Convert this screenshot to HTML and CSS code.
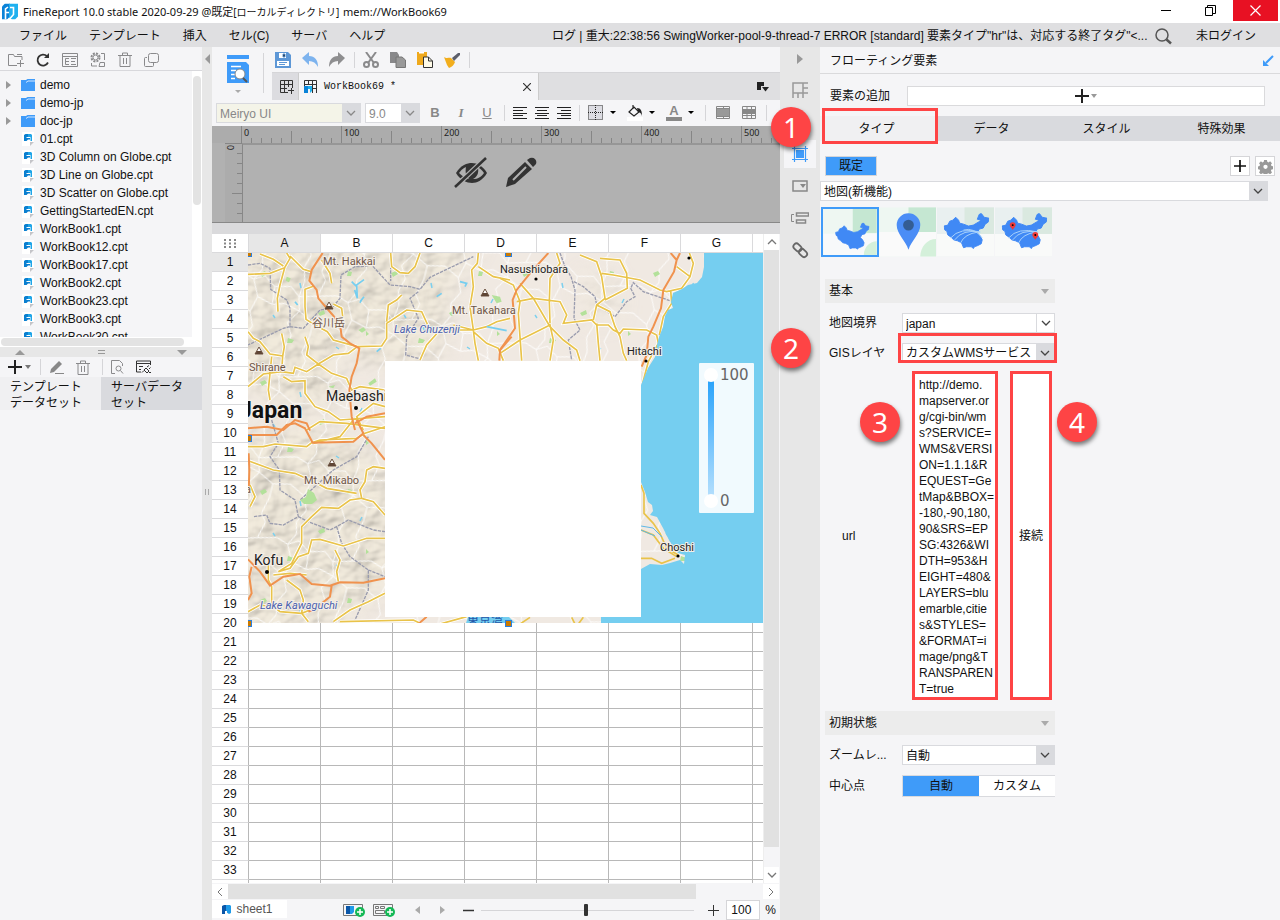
FILE: index.html
```html
<!DOCTYPE html>
<html lang="ja">
<head>
<meta charset="utf-8">
<title>FineReport 10.0</title>
<link rel="stylesheet" href="styles.css">
</head>
<body>
<svg class="defs" aria-hidden="true">
  <defs>
    <symbol id="fr" viewBox="0 0 16 16"><path d="M0 3 3 0h5v13l-3 3H0z" fill="#0a83d8"/><path d="M7 0h9v13l-3 3h-3l-3-2z" fill="#1fb0ef"/><path d="M3.500 16V9H7M3.500 9V5.500L6 3.500M8 4h3.500v7L8 15" fill="none" stroke="#fff" stroke-width="1.600"/></symbol>
    <symbol id="cpt" viewBox="0 0 12 14"><path d="M0 0h12v10l-4 4H0z" fill="#fff"/><path d="M8 10h4l-4 4z" fill="#c4c4c8"/><path d="M2 3 3.500 2H6v3H4.500v1H6v1.500L4.500 9H2z" fill="#0a7fd0"/><path d="M6 2h3l1 1v6H8.500V5H6z" fill="#1fa5e8"/><path d="M6 6h2v1.500H6z" fill="#0a7fd0"/></symbol>
    <symbol id="folder" viewBox="0 0 14 12"><path d="M0 1h5l1.500-1H14v12H0z" fill="#3f9bf9"/><path d="M5 3.500 7 2h7" stroke="#cfe5ff" fill="none"/></symbol>
    <symbol id="chev" viewBox="0 0 10 6"><path d="m1 1 4 4 4-4" fill="none" stroke="currentColor" stroke-width="1.300"/></symbol>
    <symbol id="plus" viewBox="0 0 14 14"><path d="M7 0v14M0 7h14" stroke="currentColor" stroke-width="2"/></symbol>
    <symbol id="trash" viewBox="0 0 14 15"><path d="M0 3.500h14M4.500 3V1h5v2M2 3.500v11h10v-11M5.500 6v6M8.500 6v6" fill="none" stroke="currentColor"/></symbol>
    <symbol id="china" viewBox="0 0 46 36"><path d="M0 13 4 12 6 8 9 7 12 4 15 7 16 10 20 11 25 13 30 12 35 9 38 7 34 6 36 1 38 0 41 4 46 5 45 9 42 11 40 15 36 16 34 20 37 23 39 27 38 31 34 33 31 34 30 36 28 34 23 34 20 35 18 30 14 28 10 27 7 24 4 22 3 18 1 17z" fill="#4089f5" stroke="#4089f5" stroke-linejoin="round"/></symbol>
    <symbol id="addgreen" viewBox="0 0 10 10"><circle cx="5" cy="5" r="5" fill="#14b855"/><path d="M5 2v6M2 5h6" stroke="#fff" stroke-width="1.500"/></symbol>
    <symbol id="gear" viewBox="0 0 16 16"><path fill="currentColor" fill-rule="evenodd" d="M6.500 1h3l.4 2 1.300.6 1.700-1.100 2 2-1.100 1.700.6 1.300 2 .4v3l-2 .4-.6 1.300 1.100 1.700-2 2-1.700-1.100-1.300.6-.4 1.500h-3l-.4-1.500-1.300-.6-1.700 1.100-2-2 1.100-1.700-.6-1.300-1.600-.4v-3l1.600-.4.6-1.300-1.100-1.700 2-2 1.700 1.100 1.300-.6zM8 6a2.300 2.300 0 1 0 0 4.600A2.300 2.300 0 0 0 8 6z"/></symbol>
  </defs>
</svg>
<div class="app">
  <header class="titlebar">
    <svg class="app-logo" viewBox="0 0 16 16"><use href="#fr"/></svg>
    <span class="app-name">FineReport 10.0 stable 2020-09-29 @既定<span class="app-dir">[ローカルディレクトリ]</span></span>
    <span class="app-file">mem://WorkBook69</span>
    <div class="win">
      <button class="win-btn" aria-label="最小化"><svg width="12" height="11"><path d="M1 5.500h10" stroke="#000"/></svg></button>
      <button class="win-btn" aria-label="元に戻す"><svg width="11" height="11" fill="none" stroke="#000"><path d="M.5 2.500h7v8h-7zM2.500 2V.5h8v8H8"/></svg></button>
      <button class="win-btn close" aria-label="閉じる"><svg width="11" height="11"><path d="m.5.5 10 10m0-10-10 10" stroke="#fff" stroke-width="1.200"/></svg></button>
    </div>
  </header>
  <nav class="menubar">
    <div class="menus">
      <button>ファイル</button><button>テンプレート</button><button>挿入</button><button>セル(C)</button><button>サーバ</button><button>ヘルプ</button>
    </div>
    <span class="log">ログ | 重大:22:38:56 SwingWorker-pool-9-thread-7 ERROR [standard] 要素タイプ"hr"は、対応する終了タグ"&lt;...</span>
    <button class="find" aria-label="検索"><svg width="17" height="17" fill="none" stroke="#555"><circle cx="7" cy="7" r="6" stroke-width="1.500"/><path d="m11.500 11.500 4.500 4" stroke-width="2.500"/></svg></button>
    <button class="login">未ログイン</button>
  </nav>

  <div class="body">
    <aside class="left">
      <div class="tools files">
        <button aria-label="新規フォルダ"><svg width="16" height="14" fill="none" stroke="#8a8a8c"><path d="M9 12.500H.5v-11h5l1 2H14V7M9 1.500h5M9 10.500h7M12.500 7v7"/></svg></button>
        <button aria-label="更新"><svg width="14" height="14" fill="none" stroke="#333" stroke-width="1.800"><path d="M12 9.500A5.500 5.500 0 1 1 11 3.200"/><path d="M13 0v5H8z" fill="#333" stroke="none"/></svg></button>
        <button aria-label="名前変更"><svg width="16" height="14" fill="none" stroke="#8a8a8c"><path d="M.5.5h15v13H.5zM0 3.500h16M7 5.500H3.500v6H7M4 8.500h3M9 5.500h5M9 8.500h4M9 11.500h5"/></svg></button>
        <button aria-label="設定"><svg width="16" height="15" fill="none" stroke="#8a8a8c"><circle cx="5.500" cy="5.500" r="4" stroke-width="2" stroke-dasharray="2 1.140"/><circle cx="5.500" cy="5.500" r="2.500"/><path d="M11 1.500h3.500V8M1.500 11v3H7M10 10.500h4.500v4H9z"/></svg></button>
        <button aria-label="削除"><svg class="g" width="14" height="15"><use href="#trash"/></svg></button>
        <button aria-label="コピー"><svg width="15" height="14" fill="none" stroke="#8a8a8c"><rect x="4.500" y=".5" width="10" height="9" rx="2"/><path d="M3 4.500H1.500a1 1 0 0 0-1 1v7a1 1 0 0 0 1 1h7a1 1 0 0 0 1-1V10"/></svg></button>
      </div>
      <div class="tree-wrap">
        <ul class="tree">
          <li class="dir"><svg width="5" height="8"><path d="M0 0v8l5-4z" fill="#999"/></svg><svg width="14" height="12"><use href="#folder"/></svg>demo</li>
          <li class="dir"><svg width="5" height="8"><path d="M0 0v8l5-4z" fill="#999"/></svg><svg width="14" height="12"><use href="#folder"/></svg>demo-jp</li>
          <li class="dir"><svg width="5" height="8"><path d="M0 0v8l5-4z" fill="#999"/></svg><svg width="14" height="12"><use href="#folder"/></svg>doc-jp</li>
          <li><svg width="12" height="14"><use href="#cpt"/></svg>01.cpt</li>
          <li><svg width="12" height="14"><use href="#cpt"/></svg>3D Column on Globe.cpt</li>
          <li><svg width="12" height="14"><use href="#cpt"/></svg>3D Line on Globe.cpt</li>
          <li><svg width="12" height="14"><use href="#cpt"/></svg>3D Scatter on Globe.cpt</li>
          <li><svg width="12" height="14"><use href="#cpt"/></svg>GettingStartedEN.cpt</li>
          <li><svg width="12" height="14"><use href="#cpt"/></svg>WorkBook1.cpt</li>
          <li><svg width="12" height="14"><use href="#cpt"/></svg>WorkBook12.cpt</li>
          <li><svg width="12" height="14"><use href="#cpt"/></svg>WorkBook17.cpt</li>
          <li><svg width="12" height="14"><use href="#cpt"/></svg>WorkBook2.cpt</li>
          <li><svg width="12" height="14"><use href="#cpt"/></svg>WorkBook23.cpt</li>
          <li><svg width="12" height="14"><use href="#cpt"/></svg>WorkBook3.cpt</li>
          <li><svg width="12" height="14"><use href="#cpt"/></svg>WorkBook30.cpt</li>
        </ul>
        <div class="tree-scroll"><i></i></div>
      </div>
      <div class="tree-hscroll"><i></i></div>
      <div class="hsplit"><svg width="10" height="5"><path d="M0 5h10L5 0z" fill="#999"/></svg><svg width="7" height="4"><path d="M0 .5h7M0 3.500h7" stroke="#999"/></svg><svg width="10" height="5"><path d="M0 0h10L5 5z" fill="#999"/></svg></div>
      <div class="tools data">
        <button class="add" aria-label="追加"><svg width="14" height="14"><use href="#plus"/></svg><svg width="6" height="4"><path d="M0 0h6L3 4z" fill="#777"/></svg></button>
        <span class="sep"></span>
        <button aria-label="編集"><svg width="15" height="14"><path d="m1 13 1-4 8-8 3 3-8 8z" fill="#888"/><path d="M6 13.500h9" stroke="#888"/></svg></button>
        <button aria-label="削除"><svg class="g" width="14" height="15"><use href="#trash"/></svg></button>
        <span class="sep"></span>
        <button aria-label="プレビュー"><svg width="13" height="14" fill="none" stroke="#8a8a8c"><path d="M4 13.500H.5V.5h8l3 3V6"/><circle cx="7.500" cy="8.500" r="2.500"/><path d="m9.500 10.500 2.500 3"/></svg></button>
        <button aria-label="接続"><svg width="15" height="14" fill="none" stroke="#333"><path d="M14.500 5V1H.5v11H5M0 3.500h14M3 6.500h4M3 9.500h2M13 12.500h2"/><path d="m6 12.500 2-2M8 10l3 3 2-2-3-3zM11 7l2-1.500M13 9l1.500-1.500"/></svg></button>
      </div>
      <div class="ds-tabs"><button>テンプレート<br>データセット</button><button class="off">サーバデータ<br>セット</button></div>
    </aside>

    <div class="vsplit"><svg width="5" height="10"><path d="M5 0v10L0 5z" fill="#999"/></svg><svg class="grip" width="4" height="7"><path d="M.5 0v6M3.500 0v6" stroke="#aaa"/></svg></div>

    <main class="center">
      <div class="head">
        <button class="preview" aria-label="プレビュー"><svg width="22" height="38"><path d="M0 0h22v4H0zM0 7h19l3 3v18H0z" fill="#3f9bf9"/><path d="M4 11.500h10M4 15.500h5M4 19.500h4M4 23.500h4" stroke="#fff" stroke-width="1.500"/><circle cx="13" cy="19" r="5" fill="#fff" stroke="#888"/><path d="m16 23 4 4" stroke="#555" stroke-width="2"/><path d="M8 35h6l-3 3z" fill="#aaa"/></svg></button>
        <div class="head-main">
          <div class="actions">
            <span class="sep tall"></span>
            <button aria-label="保存"><svg width="16" height="16"><path d="M0 0h13l3 3v13H0z" fill="#5d97d6"/><path d="M4 1h7v5H4zM2 9h12v5H2z" fill="#fff"/><path d="M8 2h2v3H8zM4 10.500h8M4 12.500h6" stroke="#5d97d6"/></svg></button>
            <button aria-label="元に戻す"><svg width="16" height="15"><path d="M0 6 7 0v4c6 0 9 4 9 11-2-4-5-6-9-6v4z" fill="#7db3ee"/></svg></button>
            <button aria-label="やり直す"><svg width="16" height="15"><path d="M16 6 9 0v4C3 4 0 8 0 15c2-4 5-6 9-6v4z" fill="#8e8e90"/></svg></button>
            <span class="sep"></span>
            <button aria-label="切り取り"><svg width="16" height="16" fill="none" stroke="#8a8a8c" stroke-width="2"><path d="m3 0 8 11M13 0 5 11"/><circle cx="3.500" cy="12.500" r="2.500"/><circle cx="12.500" cy="12.500" r="2.500"/></svg></button>
            <button aria-label="コピー"><svg width="16" height="16"><path d="M0 0h7l2 3v8H0z" fill="#88888a"/><path d="M6 5h6l3.500 3v7.500H6z" fill="#999" stroke="#777"/></svg></button>
            <button aria-label="貼り付け"><svg width="16" height="16"><path d="M0 0h10v13H0z" fill="#efa91c"/><path d="M2 0h5v1.500H2z" fill="#fff"/><path d="M6.500 5h5l4 4v6.500h-9z" fill="#fffbe8" stroke="#333"/><path d="M11.500 5v4h4" fill="none" stroke="#333"/></svg></button>
            <button aria-label="書式のコピー"><svg width="16" height="16"><path d="M0 5c3 2 5 0 7 1l4 4c-1 3-3 5-6 6L3 13z" fill="#f2ae1d"/><path d="m8 6 6-5 2 0v2l-6 6z" fill="#5c5f6b"/></svg></button>
            <span class="sep"></span>
          </div>
          <div class="doc-tabs">
            <button class="new-tab" aria-label="新規"><svg width="14" height="14" fill="none" stroke="#333"><path d="M8 12.500H.5V.5h12V8M0 4.500h13M0 8.500h7M4.500 0v13M8.500 0v7M8 10.500h6M11.500 8v6"/></svg></button>
            <div class="doc-tab"><svg width="13" height="13"><path d="M.5 13V.5h12V13M0 4.500h13M4.500 0v5M8.500 0v13M9 8.500h4" fill="none" stroke="#333"/><path d="M0 6h8v7H0z" fill="#f5f5f7"/><path d="M0 6h4v7H0z" fill="#0a83d8"/><path d="M4 6h4v5l-2 2V9H4z" fill="#1fb0ef"/></svg><span>WorkBook69 *</span><button class="x" aria-label="閉じる"><svg width="8" height="8"><path d="m0 0 8 8m0-8L0 8" stroke="#333" stroke-width="1.200"/></svg></button></div>
            <button class="tab-list" aria-label="タブ一覧"><svg width="12" height="10"><path d="M0 0h7v4H4v4H0z" fill="#222"/><path d="M5 5h7L8.500 9.500z" fill="#222"/></svg></button>
          </div>
        </div>
      </div>
      <div class="format">
        <div class="select font"><select aria-label="フォント" disabled><option>Meiryo UI</option></select><span class="arrow"><svg width="10" height="6"><use href="#chev"/></svg></span></div>
        <div class="select size"><select aria-label="サイズ" disabled><option>9.0</option></select><span class="arrow"><svg width="10" height="6"><use href="#chev"/></svg></span></div>
        <button class="txt bold">B</button><button class="txt ital">I</button><button class="txt und">U</button>
        <span class="sep"></span>
        <button aria-label="左揃え"><svg width="14" height="12" stroke="#222"><path d="M0 .5h14M0 3.500h10M0 6.500h14M0 8.500h10M0 11.500h14"/></svg></button>
        <button aria-label="中央揃え"><svg width="14" height="12" stroke="#222"><path d="M0 .5h14M2 3.500h10M0 6.500h14M2 8.500h10M0 11.500h14"/></svg></button>
        <button aria-label="右揃え"><svg width="14" height="12" stroke="#222"><path d="M0 .5h14M4 3.500h10M0 6.500h14M4 8.500h10M0 11.500h14"/></svg></button>
        <span class="sep"></span>
        <button class="drop" aria-label="罫線"><svg width="16" height="16"><path d="M.5.5h14v14H.5z" fill="#dcdce2"/><path d="M.5.5h14v14H.5zM7.500 0v15M0 7.500h15" fill="none" stroke="#222" stroke-dasharray="1 1"/></svg><svg width="6" height="4"><path d="M0 0h6L3 3z"/></svg></button>
        <button class="drop" aria-label="塗りつぶし"><svg width="16" height="16"><path d="M0 12h16v4H0z" fill="#fff"/><path d="m2 7 5-5 5 5-5 4zM6 0v4" fill="#f5f5f7" stroke="#222" stroke-width="1.200"/><path d="M10 3c4 0 5 3 5 8-1-3-2-4-4-4z" fill="#222"/></svg><svg width="6" height="4"><path d="M0 0h6L3 3z"/></svg></button>
        <button class="drop fc" aria-label="文字色"><span>A</span><svg width="6" height="4"><path d="M0 0h6L3 3z"/></svg></button>
        <span class="sep"></span>
        <button class="wide" aria-label="セル結合"><svg width="15" height="14"><path d="M.5.5h13v12H.5zM0 2.500h14M0 10.500h14M7.500 0v2M7.500 11v2" fill="none" stroke="#888"/><path d="M1 3h12v7H1z" fill="#999"/></svg></button>
        <button class="wide" aria-label="結合解除"><svg width="15" height="14"><path d="M.5.5h13v12H.5z" fill="#f5f5f7" stroke="#888"/><path d="M0 3.500h14M0 9.500h14M5 0v13M9.500 0v13" stroke="#888"/><path d="M1 4h12v4H1z" fill="#888"/></svg></button>
        <span class="sep"></span>
      </div>

      <div class="report-head">
        <svg class="ruler-x" height="17">
          <defs>
            <pattern id="tx" x="29" width="100" height="17" patternUnits="userSpaceOnUse"><path d="M.5 0v17M50.500 5v12M10.500 12v5M20.500 12v5M30.500 12v5M40.500 12v5M60.500 12v5M70.500 12v5M80.500 12v5M90.500 12v5" stroke="#868686"/></pattern>
            <pattern id="ty" y="0" width="17" height="100" patternUnits="userSpaceOnUse"><path d="M0 .5h17M7 50.500h10M12 10.500h5M12 20.500h5M12 30.500h5M12 40.500h5M12 60.500h5M12 70.500h5" stroke="#868686"/></pattern>
          </defs>
          <rect x="29" width="100%" height="17" fill="url(#tx)"/>
          <g class="ruler-num"><text x="32" y="10">0</text><text x="132" y="10">100</text><text x="232" y="10">200</text><text x="332" y="10">300</text><text x="432" y="10">400</text><text x="532" y="10">500</text></g>
        </svg>
        <div class="rh-body">
          <svg class="ruler-y" width="17"><rect width="17" height="100%" fill="url(#ty)"/><text class="ruler-num" transform="translate(2 6) rotate(90)" x="-4" y="0">0</text></svg>
          <div class="rh-canvas">
            <button aria-label="非表示"><svg width="34" height="31"><path d="M2 16C7 8 13 6 18 6s11 3 15 10c-4 7-10 10-15 10S6 23 2 16z" fill="#333"/><path d="M5 16c3-4 5-5 7-6-1 6 0 9 3 12-4-1-7-3-10-6zm25 0c-2-3-4-5-6-5 1 5-1 9-5 11 5 0 8-2 11-6z" fill="#b1b1b1"/><path d="M1 30 32 1" stroke="#b1b1b1" stroke-width="5"/><path d="M1 30 32 1" stroke="#333" stroke-width="2.500"/></svg></button>
            <button aria-label="編集"><svg width="32" height="31"><path d="m1 30 2-9L20 5l7 7L10 27zM22 3l3-2q3-1 5 1t1 5l-3 3z" fill="#333"/><path d="m8 23 13-13" stroke="#b1b1b1" stroke-width="2"/></svg></button>
          </div>
        </div>
      </div>

      <div class="sheet-wrap">
        <div class="sheet">
          <table>
            <thead><tr><th class="corner"><svg width="12" height="9"><path d="M0 1h12M0 4.500h12M0 8h12" stroke="#888" stroke-width="2" stroke-dasharray="2 3"/></svg></th><th class="on">A</th><th>B</th><th>C</th><th>D</th><th>E</th><th>F</th><th>G</th><th></th></tr></thead>
            <tbody>
            <tr><th class="on">1<td><td><td><td><td><td><td><td>
            <tr><th>2<td><td><td><td><td><td><td><td>
            <tr><th>3<td><td><td><td><td><td><td><td>
            <tr><th>4<td><td><td><td><td><td><td><td>
            <tr><th>5<td><td><td><td><td><td><td><td>
            <tr><th>6<td><td><td><td><td><td><td><td>
            <tr><th>7<td><td><td><td><td><td><td><td>
            <tr><th>8<td><td><td><td><td><td><td><td>
            <tr><th>9<td><td><td><td><td><td><td><td>
            <tr><th>10<td><td><td><td><td><td><td><td>
            <tr><th>11<td><td><td><td><td><td><td><td>
            <tr><th>12<td><td><td><td><td><td><td><td>
            <tr><th>13<td><td><td><td><td><td><td><td>
            <tr><th>14<td><td><td><td><td><td><td><td>
            <tr><th>15<td><td><td><td><td><td><td><td>
            <tr><th>16<td><td><td><td><td><td><td><td>
            <tr><th>17<td><td><td><td><td><td><td><td>
            <tr><th>18<td><td><td><td><td><td><td><td>
            <tr><th>19<td><td><td><td><td><td><td><td>
            <tr><th>20<td><td><td><td><td><td><td><td>
            <tr><th>21<td><td><td><td><td><td><td><td>
            <tr><th>22<td><td><td><td><td><td><td><td>
            <tr><th>23<td><td><td><td><td><td><td><td>
            <tr><th>24<td><td><td><td><td><td><td><td>
            <tr><th>25<td><td><td><td><td><td><td><td>
            <tr><th>26<td><td><td><td><td><td><td><td>
            <tr><th>27<td><td><td><td><td><td><td><td>
            <tr><th>28<td><td><td><td><td><td><td><td>
            <tr><th>29<td><td><td><td><td><td><td><td>
            <tr><th>30<td><td><td><td><td><td><td><td>
            <tr><th>31<td><td><td><td><td><td><td><td>
            <tr><th>32<td><td><td><td><td><td><td><td>
            <tr><th>33<td><td><td><td><td><td><td><td>
            <tr><th><td><td><td><td><td><td><td><td>
            </tbody>
          </table>
          <div class="map">
            <svg width="515" height="370" viewBox="0 0 515 370" role="img" aria-label="地図">
              <defs>
                <filter id="relief" x="0" y="0" width="100%" height="100%"><feTurbulence type="fractalNoise" baseFrequency=".035 .045" numOctaves="3" seed="8"/><feDiffuseLighting surfaceScale="6" lighting-color="#f3ecd9"><feDistantLight azimuth="225" elevation="62"/></feDiffuseLighting></filter>
                <filter id="soft"><feGaussianBlur stdDeviation="12"/></filter>
                <mask id="hills"><g filter="url(#soft)" fill="#fff"><path d="M-20-20H235L205 30 190 110 110 110 85 80 90 150 60 155-20 130z"/><path d="M-20 185 60 170 120 195 150 240V330L70 380H-20z"/><path d="M330 20h40v50h-30z" opacity=".5"/></g></mask>
                <pattern id="minor" width="97" height="83" patternUnits="userSpaceOnUse" patternTransform="rotate(14)"><path d="M0 20 12 24 22 18 34 26 50 22 60 30 78 25 97 20M15 0 18 12 12 24 20 40 16 56 22 70 15 83M60 30 64 44 55 58 62 70 58 83M58 0 62 14 60 30M20 40 36 44 48 40 64 44 80 52 97 48M0 48 16 56M34 26 36 44M78 25 82 8 76 0M76 83 80 66 80 52" fill="none" stroke="#fff" stroke-width="1"/></pattern>
                <pattern id="spots" width="131" height="109" patternUnits="userSpaceOnUse"><path d="M12 20l5-2 2 3-5 3zM70 60l6-3 1 4-5 2zM100 18l4 1-1 4-4 0zM40 85l6 2-2 3-5 0zM118 78l3 3-3 2z" fill="#b3e19a"/><path d="M52 30l1 5M88 94l3 2M25 62l2 3M112 50l2-4" stroke="#7dd0ee" stroke-width="1.500"/></pattern>
                <linearGradient id="bar" x2="0" y2="1"><stop stop-color="#2ba4fb"/><stop offset="1" stop-color="#b4dffd"/></linearGradient>
                <path id="peak" d="M0 7 4 0l4 7z" fill="#fff" stroke="#6b5040"/>
                <path id="peakbase" d="M0 7 2 4h4l2 3z" fill="#5f4535"/>
                <path id="nwy" d="M24 133 90 130 134 113 150 85 140 69M134 113 120 165 112 205 114 245M60 72 100 88 130 108M150 78 190 118 213 125M222 168 195 178V230L198 268 225 285 262 305 280 330 352 350M24 305 40 325 60 335 90 372 128 378 125 425 160 430 165 412 200 425 235 402 280 375 325 370 352 350M24 470 70 432 125 425M95 380 85 480 90 510M125 310 133 350 128 378M195 320 205 350 200 375 235 402 275 430 320 445 335 480 360 470 435 480M130 440 155 455 195 452V490L225 530 265 545 300 570 435 560M280 222 305 235 308 260M245 90 270 130 275 160M352 350 425 348 440 325V280L500 240 545 245 570 300M440 275 445 225 470 210 485 195M452 69 455 110 480 128 505 130 525 110 540 69M715 69 712 100 695 120 700 170 690 230 700 300 600 300 560 345 540 390M715 110 760 140 810 150M700 300 705 340 715 392M700 305 740 340 775 355 790 392M640 285 700 300 740 290 770 275 810 265M370 600 350 560 400 520 435 530M200 600 240 575 320 580 435 595"/>
                <path id="ney" d="M0 145 40 165 60 215 55 250 65 392M170 69 180 100 150 145 148 215 150 280M60 160 100 205 150 290 190 330 230 360 240 392M50 215 100 205 180 215 200 255 190 280 275 270 290 285 325 285 340 300 360 310 370 297 440 300 470 315M240 75 290 95 305 140 315 205 290 225 280 270M300 85 360 90 380 130 382 175 315 210M305 130 340 135 420 150 480 180 500 185 545 175 570 140 580 100 568 69M530 110 570 140M290 225 330 245 345 290 360 320 370 370 380 392M290 280 295 340 300 392M470 315 475 340 445 395 428 460M512 180 515 220 490 260 478 315M0 370 60 330 150 285 160 330 150 392"/>
                <path id="swy" d="M24 80 70 80 105 72 200 80 215 68 240 60 350 55 375 40 435 20M24 122 100 150 165 160 230 190 260 205 350 220M435 145 400 140 380 150 375 185 360 210 365 235 330 240 295 265 245 262 215 290 185 320V370L155 430 115 455 150 445 175 410 205 400 215 360 240 358 310 378 380 355 435 355M365 235 400 245 435 285M285 390 300 420 290 455 295 485M100 465 150 460 200 465M85 410V480L95 500V555L120 575 185 580 210 570M24 575 60 555 95 560M280 605 330 570 385 545 435 520M140 480 180 510 190 540 185 580 205 605M30 195 45 230 30 260M220 70 300 50 340 0M300 605 520 600 545 612M600 612 680 590"/>
                <path id="sey" d="M423 195 432 220V280L460 310 480 340 500 385 535 405M423 330 460 345 490 385 530 410M423 415 455 415 485 430 525 415M60 612 90 592M215 592 225 612M235 612 250 592"/>
              </defs>
              <rect width="515" height="370" fill="#f0e9e2"/>
              <rect width="515" height="370" filter="url(#relief)" mask="url(#hills)" opacity=".6"/>
              <rect width="515" height="370" fill="url(#minor)" opacity=".85"/>
              <rect width="515" height="370" fill="url(#spots)"/>
              <g class="gray" transform="translate(-8 -23) scale(.33333)"><path d="M24 105 60 100 90 115 92 178 140 210 150 235 150 290 130 295 24 345M150 290l40 5 50-55 35-5 25-30 3-70 42-25 20 0 30-5 55 60 60 5 30 8 30-36L700 80M452 69v84M535 185l-25 20 15 35 10 25-35 55-3 55 48 13"/></g>
              <g class="gray" transform="translate(252 -23) scale(.33333)"><path d="m180 69 15 41 18 30 12 40-3 85 18 35-35 30 10 60M222 155l28 15 35 30 5 25 55 35 35-45 25-15-13-25 8-17 30 27 80 27"/></g>
              <g class="gray" transform="translate(-8 167) scale(.33333)"><path d="m95 0 20 70-25 40 28 40 2 60 45 30 10 50-45 25-40-5-10-25-40 5M175 290l30 15 65 25 20-10 35-20 75 30 35 5M290 320l15 50 25 40 55 40v60l-40 90M385 50l-35 60-70 40-100 90M385 450l50 20"/></g>
              <g class="casing">
                <use href="#nwy" transform="translate(-8 -23) scale(.33333)"/>
                <use href="#ney" transform="translate(252 -23) scale(.33333)"/>
                <use href="#swy" transform="translate(-8 167) scale(.33333)"/>
              </g>
              <g class="yellow">
                <use href="#nwy" transform="translate(-8 -23) scale(.33333)"/>
                <use href="#ney" transform="translate(252 -23) scale(.33333)"/>
                <use href="#swy" transform="translate(-8 167) scale(.33333)"/>
              </g>
              <g class="orange" transform="translate(-8 -23) scale(.33333)"><path d="M248 69 215 120 208 152 230 180 235 205 265 240 300 280 305 320 330 340 358 355 350 400 335 440 328 480 335 560 345 600M345 580 380 560 435 550M815 320 780 360 778 392M24 595 80 590 130 600 165 570 200 580 210 602"/></g>
              <g class="orange" transform="translate(252 -23) scale(.33333)"><path d="M145 69 90 130 50 180 38 210 45 295 0 360M512 69 530 90 522 125 490 180 483 235 460 290 445 320 440 375 425 410M540 69 530 90"/></g>
              <g class="orange" transform="translate(-8 167) scale(.33333)"><path d="M24 418 60 455 90 497 130 470 180 462 215 492 270 497 300 487 370 488 435 475M275 497 270 530 220 570 205 575M24 540 35 520 28 470 35 440M24 45 110 45 140 15 165 10 195 25 218 68 340 65 370 40 350 0M370 45 395 70 435 120M26 100 28 150 26 220M535 612 560 590"/></g>
              <g transform="translate(-8 -23) scale(.33333)"><path d="m335 155 12 12 25-18M350 165l2 40-8-25M372 200l-12 15M165 215l8 10M590 200l15-10M660 155l20 5-5 10M410 365l12-10M740 290l60 12" fill="none" stroke="#75cef0" stroke-width="5"/><path d="M545 290 560 285 582 290 578 305 555 308z" fill="#75cef0"/><path d="m355 300 15-8 8 8-12 8zM140 140l12 5-5 12-10-5zM385 460l20-15 5 10-20 12zM755 195l25 5 5 15-15 5zM265 470l20-5-5 10z" fill="#b3e19a"/></g>
              <path d="m52 247 6-3 2-8 6 4 3 7-5 4-8 0z" fill="#b3e19a"/>
              <path d="M456 0V14L454 24 449 30 440 32 434 36 425 40 423 49 425 55 420 57 417 63 415 74 411 84 409 92 407 104 400 115 396 125 393 132V229L397 239 400 249 404 252 405 258 402 262 409 264 415 275 422 289 430 300 437 302 436 311 432 307 422 310 414 312 402 311 393 316V364H353V370H515V0z" fill="#75cef0"/>
              <g class="yellow"><use href="#sey" transform="translate(252 167) scale(.33333)"/></g>
              <path d="M393 273l12 2 9 9M393 277l14 6" fill="none" stroke="#5fb8e6"/>
              <path d="M220 364h41l6 6H218z" fill="#75cef0"/>
              <g class="lbl brown"><text x="75" y="12">Mt. Hakkai</text><text x="64" y="74">谷川岳</text><text x="204" y="61">Mt. Takahara</text><text x="1" y="118">Shirane</text><text x="56" y="231">Mt. Mikabo</text><text x="-3" y="240">a</text></g>
              <g class="lbl blue"><text x="146" y="80">Lake Chuzenji</text><text x="12" y="356">Lake Kawaguchi</text></g>
              <g class="lbl city"><text x="252" y="20">Nasushiobara</text><text x="379" y="102">Hitachi</text><text x="412" y="298">Choshi</text></g>
              <g class="lbl town"><text x="78" y="148">Maebashi</text><text x="6" y="312">Kofu</text></g>
              <text class="lbl country" x="-9" y="165">Japan</text>
              <text class="lbl bay" x="219" y="371">東京湾</text>
              <g><use href="#peak" x="77" y="49"/><use href="#peakbase" x="77" y="49"/><use href="#peak" x="233" y="36"/><use href="#peakbase" x="233" y="36"/><use href="#peak" x="7" y="94"/><use href="#peakbase" x="7" y="94"/><use href="#peak" x="80" y="206"/><use href="#peakbase" x="80" y="206"/></g>
              <g><circle cx="288" cy="26" r="1.600"/><circle cx="441" cy="5" r="1.600"/><circle cx="108" cy="155" r="2"/><circle cx="398" cy="108" r="1.600"/><circle cx="19" cy="319" r="2"/><circle cx="430" cy="303" r="1.600"/></g>
              <rect x="137" y="108" width="256" height="256" fill="#fff"/>
              <rect x="451" y="110" width="55" height="150" rx="1" fill="#f1fafe"/>
              <rect x="460" y="128" width="6" height="116" fill="url(#bar)"/>
              <circle cx="463" cy="122" r="7" fill="#fff"/><circle cx="463" cy="248" r="7" fill="#fff"/>
              <g class="scale"><text x="472" y="127">100</text><text x="472" y="253">0</text></g>
            </svg>
            <i class="grab" style="left:-3px;top:-3px"></i><i class="grab" style="left:257px;top:-3px"></i><i class="grab" style="left:-3px;top:182px"></i><i class="grab" style="left:-3px;top:367px"></i><i class="grab" style="left:257px;top:367px"></i>
          </div>
        </div>
        <div class="vscroll"><button aria-label="上へ"><svg class="up" width="10" height="6"><use href="#chev"/></svg></button><i></i><button aria-label="下へ"><svg width="10" height="6"><use href="#chev"/></svg></button></div>
      </div>
      <div class="hscroll"><button aria-label="左へ"><svg width="6" height="10"><path d="M5 1 1 5l4 4" fill="none" stroke="#777"/></svg></button><i></i><button aria-label="右へ"><svg width="6" height="10"><path d="m1 1 4 4-4 4" fill="none" stroke="#777"/></svg></button></div>
      <div class="sheetbar">
        <button class="sheet-tab"><svg width="9" height="9"><path d="M0 1 2 0h2v9H0z" fill="#0a56a8"/><path d="M4 0h4l1 1v7L7 9 4 7z" fill="#1f9ae8"/><path d="M3 6h2v3H3z" fill="#fff"/></svg>sheet1</button>
        <div class="sheet-new">
          <button aria-label="シート追加"><svg width="22" height="13"><path d="M.5.5h19v11H.5z" fill="none" stroke="#777"/><path d="M3 2h4v8H3z" fill="#0a56a8"/><path d="M7 2h4v6l-2 2H7z" fill="#1f9ae8"/><use href="#addgreen" x="12" y="3" width="10" height="10"/></svg></button>
          <button aria-label="フォーム追加"><svg width="22" height="13"><path d="M.5.5h19v11H.5zM2.500 2.500h3v2h-3zM7.500 2.500h4v2h-4zM2.500 6.500h9v3h-9z" fill="none" stroke="#777"/><use href="#addgreen" x="12" y="3" width="10" height="10"/></svg></button>
        </div>
        <div class="sheet-nav"><button aria-label="前"><svg width="5" height="8"><path d="M5 0v8L0 4z" fill="#aaa"/></svg></button><button aria-label="次"><svg width="5" height="8"><path d="M0 0v8l5-4z" fill="#aaa"/></svg></button></div>
        <button aria-label="縮小"><svg width="11" height="10"><path d="M0 5.500h11" stroke="#333" stroke-width="1.500"/></svg></button>
        <input class="zoom" type="range" aria-label="ズーム" min="0" max="200" value="98">
        <button aria-label="拡大"><svg width="11" height="11"><path d="M0 5.500h11M5.500 0v11" stroke="#333"/></svg></button>
        <input class="pct" type="text" aria-label="倍率" value="100"><span>%</span>
      </div>
    </main>

    <nav class="rail">
      <button class="fold" aria-label="折りたたむ"><svg width="6" height="10"><path d="M0 0v10l6-5z" fill="#999"/></svg></button>
      <button aria-label="セル要素"><svg width="17" height="17" fill="none" stroke="#999" stroke-width="1.500"><path d="M1 16V1h15M1 11h15M11 1v15M6 11v5M11 6h5M16 11h-5"/></svg></button>
      <button aria-label="セル属性"></button>
      <button class="on" aria-label="フローティング要素"><svg width="16" height="16"><path d="M2.500 0v16M13.500 0v16M0 2.500h16M0 13.500h16" stroke="#3f9bf9" stroke-width="1.200"/><path d="M4 4h8v8H4z" fill="#3f9bf9"/></svg></button>
      <button aria-label="ウィジェット"><svg width="16" height="12"><path d="M1 1h14v10H1z" fill="none" stroke="#888" stroke-width="1.500"/><path d="M8 4h6l-3 4z" fill="#888"/></svg></button>
      <button aria-label="条件属性"><svg width="18" height="13" fill="none" stroke="#888"><path d="M5.500 1h12v3h-12zM5.500 8h9v3h-9z" stroke-width="1.500"/><path d="M3 2.500H.5v7H3"/></svg></button>
      <button aria-label="ハイパーリンク"><svg width="17" height="17" fill="none" stroke="#666" stroke-width="1.800"><rect x="-4.500" y="-3" width="9" height="6" rx="3" transform="translate(5.500 5.500) rotate(45)"/><rect x="-4.500" y="-3" width="9" height="6" rx="3" transform="translate(11 11) rotate(45)"/></svg></button>
      <span class="badge b1">1</span><span class="badge b2">2</span>
    </nav>

    <aside class="right">
      <div class="panel-title"><h2>フローティング要素</h2><button aria-label="ドッキング"><svg width="12" height="12"><path d="m11 1-7 7" stroke="#3f9bf9" stroke-width="2"/><path d="M1 5v6h6z" fill="#3f9bf9"/></svg></button></div>
      <div class="add-row"><span>要素の追加</span><button aria-label="要素の追加"><svg width="14" height="14"><use href="#plus"/></svg><svg width="6" height="4"><path d="M0 0h6L3 4z" fill="#999"/></svg></button></div>
      <div class="tabs"><button class="on">タイプ</button><button>データ</button><button>スタイル</button><button>特殊効果</button><span class="mark m1"></span></div>
      <div class="preset"><button class="default">既定</button><button class="sq" aria-label="追加"><svg width="12" height="12" viewBox="0 0 14 14"><use href="#plus"/></svg></button><button class="sq cog" aria-label="設定"><svg width="15" height="15"><use href="#gear"/></svg></button></div>
      <div class="select kind"><select aria-label="種類"><option>地図(新機能)</option></select><span class="arrow"><svg width="10" height="6"><use href="#chev"/></svg></span></div>
      <div class="thumbs">
        <button class="on" aria-label="エリア地図"><svg viewBox="0 0 58 50"><path d="M0 0h58v50H0z" fill="#eef7f2"/><path d="M32 0h26v26H32z" fill="#c5e7d2"/><path d="M0 27h58v23H0z" fill="#f7f9fa"/><path d="M44 50c0-9 7-15 14-15v15z" fill="#d4f0da"/><use href="#china" x="13" y="15" width="37" height="29"/></svg></button>
        <button aria-label="ポイント地図"><svg viewBox="0 0 58 50"><path d="M0 0h58v50H0z" fill="#eef7f2"/><path d="M30 0h28v25H30z" fill="#c5e7d2"/><path d="M0 25h58v25H0z" fill="#fafafa"/><path d="M42 50c0-10 7-18 16-18v18z" fill="#d4f0da"/><path d="M30 43C27 34 18 27 18 18a12 12 0 0 1 24 0c0 9-9 16-12 25z" fill="#4b8df6"/><circle cx="30" cy="18" r="5.500" fill="#345d94"/></svg></button>
        <button aria-label="ライン地図"><svg viewBox="0 0 58 50"><path d="M0 0h58v50H0z" fill="#e9f0f0"/><path d="M28 0h30v27H28z" fill="#dae9e0"/><path d="M0 27h58v23H0z" fill="#f9faf9"/><use href="#china" x="7" y="6" width="46" height="36"/><path d="M14 31q9-11 30-6M18 33q8-11 26-8M24 36q4-9 18-11M46 31q-8-11-19-8" fill="none" stroke="#a9d2fb"/></svg></button>
        <button aria-label="カスタム地図"><svg viewBox="0 0 58 50"><path d="M0 0h58v50H0z" fill="#e9f0f0"/><path d="M28 0h30v27H28z" fill="#dae9e0"/><path d="M0 27h58v23H0z" fill="#f9faf9"/><use href="#china" x="7" y="6" width="46" height="36"/><path d="M14 31q9-11 30-6M18 33q8-11 26-8M24 36q4-9 18-11" fill="none" stroke="#a9d2fb"/><path d="M18 23c-1-2-3-3-3-5a3 3 0 0 1 6 0c0 2-2 3-3 5zM41 33c-1-2-3-3-3-5a3 3 0 0 1 6 0c0 2-2 3-3 5z" fill="#ee3a3a"/><circle cx="18" cy="18" r="1"/><circle cx="41" cy="28" r="1"/></svg></button>
      </div>
      <section class="group">
        <h3>基本<svg width="8" height="5"><path d="M0 0h8L4 5z" fill="#aaa"/></svg></h3>
        <div class="row r1"><label for="edge">地図境界</label><div class="select light"><select id="edge"><option>japan</option></select><span class="arrow"><svg width="10" height="6"><use href="#chev"/></svg></span></div></div>
        <div class="row r2"><label for="gis">GISレイヤ</label><div class="select"><select id="gis"><option>カスタムWMSサービス</option></select><span class="arrow"><svg width="10" height="6"><use href="#chev"/></svg></span><span class="mark m2"></span></div></div>
        <div class="url-row"><label for="url">url</label>
          <textarea id="url" class="framed" wrap="off" rows="20" spellcheck="false">http://demo.
mapserver.or
g/cgi-bin/wm
s?SERVICE=
WMS&amp;VERSI
ON=1.1.1&amp;R
EQUEST=Ge
tMap&amp;BBOX=
-180,-90,180,
90&amp;SRS=EP
SG:4326&amp;WI
DTH=953&amp;H
EIGHT=480&amp;
LAYERS=blu
emarble,citie
s&amp;STYLES=
&amp;FORMAT=i
mage/png&amp;T
RANSPAREN
T=true</textarea>
          <button class="framed connect">接続</button>
          <span class="badge b3">3</span><span class="badge b4">4</span>
        </div>
      </section>
      <section class="group">
        <h3>初期状態<svg width="8" height="5"><path d="M0 0h8L4 5z" fill="#aaa"/></svg></h3>
        <div class="row r1"><label for="zl">ズームレ...</label><div class="select"><select id="zl"><option>自動</option></select><span class="arrow"><svg width="10" height="6"><use href="#chev"/></svg></span></div></div>
        <div class="row r1"><span class="lab">中心点</span><div class="seg"><button class="on">自動</button><button>カスタム</button></div></div>
      </section>
    </aside>
  </div>
</div>
</body>
</html>
```
FILE: styles.css
```css
* { box-sizing: border-box; }
body { margin: 0; font: 12px/16px "Liberation Sans", "Noto Sans CJK JP", sans-serif; color: #111; background: #f5f5f7; }
button { border: 0; padding: 0; background: none; font: inherit; color: inherit; display: flex; align-items: center; justify-content: center; flex: none; }
select, input, textarea { font: inherit; color: inherit; margin: 0; }
svg { flex: none; display: block; }
h2, h3 { margin: 0; font: inherit; }
.defs { position: absolute; width: 0; height: 0; }
.app { display: flex; flex-direction: column; height: 100vh; overflow: hidden; }
.g { color: #8a8a8c; }
.sep { width: 1px; height: 16px; background: #d5d5d8; flex: none; }

.titlebar { display: flex; align-items: center; height: 23px; flex: none; background: #fff; padding-left: 2px; font-family: "Noto Sans", "Noto Sans CJK JP", sans-serif; }
.app-logo { width: 16px; height: 17px; margin-right: 5px; }
.app-name { width: 320px; white-space: nowrap; }
.app-name, .app-file { font-size: 11px; }
.app-dir { font-size: 10px; }
.win { margin-left: auto; display: flex; align-self: flex-start; margin-right: 2px; }
.win-btn { width: 45px; height: 21px; }
.win-btn.close { background: #e81123; }

.menubar { display: flex; align-items: center; height: 24px; flex: none; background: #dfdfe1; padding: 2px 0 0 19px; }
.menus { display: flex; gap: 22px; width: 533px; }
.log { flex: 1; white-space: nowrap; overflow: hidden; }
.find { width: 24px; }
.login { margin: 0 24px 0 20px; }

.body { display: flex; flex: 1; min-height: 0; }
.left { width: 202px; flex: none; display: flex; flex-direction: column; background: #f5f5f7; }
.tools { display: flex; align-items: center; flex: none; }
.files { height: 24px; gap: 12px; padding: 2px 8px 0; border-bottom: 1px solid #d8d8dc; }
.tree-wrap { display: flex; height: 266px; flex: none; overflow: hidden; }
.tree { flex: 1; margin: 0; padding: 5px 0 0 6px; list-style: none; }
.tree li { display: flex; align-items: center; gap: 6px; height: 18px; padding-left: 16px; white-space: nowrap; }
.tree li.dir { padding-left: 0; gap: 5px; }
.tree li.dir svg + svg { margin-left: 5px; }
.tree-scroll { width: 10px; background: #fff; padding: 5px 1px 0; }
.tree-scroll i { display: block; height: 129px; border-radius: 4px; background: #e3e3e3; }
.tree-hscroll { height: 10px; flex: none; background: #fff; padding: 1px 18px 1px 1px; }
.tree-hscroll i { display: block; height: 8px; border-radius: 4px; background: #e3e3e3; }
.hsplit { height: 10px; flex: none; background: #e7e7e7; display: flex; align-items: center; justify-content: space-between; padding: 0 15px; }
.data { height: 20px; gap: 12px; padding: 0 8px; }
.data .add { gap: 3px; color: #222; margin-right: -3px; }
.data .sep { margin-right: -4px; }
.ds-tabs { display: flex; flex: none; height: 33px; }
.ds-tabs button { flex: 1; background: #f0f0f2; text-align: left; justify-content: flex-start; padding: 2px 0 0 10px; }
.ds-tabs .off { background: #d9dade; }
.vsplit { width: 10px; flex: none; background: #e7e7e7; display: flex; flex-direction: column; align-items: center; padding-top: 7px; }
.vsplit .grip { margin: auto 0; }

.center { flex: 1; min-width: 0; display: flex; flex-direction: column; background: #f5f5f7; }
.head { display: flex; flex: none; height: 53px; }
.preview { width: 51px; }
.head-main { flex: 1; display: flex; flex-direction: column; }
.actions { height: 25px; display: flex; align-items: center; gap: 11px; }
.actions .sep { margin: 0 -3px 0 -2px; }
.actions .tall { height: 40px; align-self: flex-start; margin: 6px 0 0; }
.doc-tabs { height: 28px; margin-left: 9px; display: flex; background: #dfdfe1; border-top: 1px solid #d5d5d8; }
.new-tab { width: 27px; background: #dcdce0; border-right: 1px solid #ccc; padding-left: 4px; }
.doc-tab { width: 240px; background: #f5f5f7; border-right: 1px solid #ccc; display: flex; align-items: center; gap: 7px; padding: 0 7px 0 5px; font: 10px "Liberation Mono", monospace; }
.doc-tab .x { margin-left: auto; }
.tab-list { margin: 0 11px 0 auto; }
.format { height: 26px; flex: none; display: flex; align-items: center; gap: 8px; padding-left: 4px; }
.select { display: flex; position: relative; height: 20px; background: #fff; border: 1px solid #d9dade; }
.select select { flex: 1; min-width: 0; appearance: none; border: 0; background: none; padding: 1px 20px 0 3px; opacity: 1; }
.select .arrow { position: absolute; right: 0; top: 0; bottom: 0; width: 18px; background: #d9dade; display: flex; align-items: center; justify-content: center; pointer-events: none; color: #444; }
.light .arrow { background: #fff; border-left: 1px solid #d9dade; }
.format .select, .format .arrow { color: #888; }
.format .font { width: 145px; background: #f4f4e8; margin-right: -4px; }
.format .size { width: 55px; margin-right: -2px; }
.txt { width: 18px; color: #888; font-size: 13px; }
.bold { font-weight: bold; }
.ital { font: italic bold 13px "Liberation Serif", serif; }
.und { text-decoration: underline; }
.wide { width: 18px; }
.drop { gap: 6px; margin-right: 3px; }
.fc span { width: 16px; border-bottom: 4px solid #888; font: bold 13px/12px "Liberation Sans", sans-serif; color: #888; }

.report-head { flex: none; height: 97px; background: #b1b1b1; border-bottom: 1px solid #888; display: flex; flex-direction: column; }
.ruler-x { width: 100%; background: #acacac; }
.ruler-num { font: 9px "Noto Sans", sans-serif; fill: #222; }
.rh-body { flex: 1; display: flex; padding-left: 13px; min-height: 0; }
.ruler-y { height: 100%; background: #acacac; }
.rh-canvas { flex: 1; border-left: 1px solid #888; border-top: 2px solid #969696; display: flex; justify-content: center; align-items: flex-start; gap: 17px; padding: 12px 32px 0 0; }
.sheet-wrap { flex: 1; min-height: 0; display: flex; border-top: 11px solid #dadadc; }
.sheet { flex: 1; min-width: 0; overflow: hidden; position: relative; background: #fff; }
.sheet table { border-collapse: separate; border-spacing: 0; table-layout: fixed; width: 613px; }
.sheet th, .sheet td { height: 19px; padding: 0; border-right: 1px solid #b8b8b8; border-bottom: 1px solid #b8b8b8; width: 72px; }
.sheet th { font-weight: normal; line-height: 17px; border-color: #dadadc; background: #fff; }
.sheet th:first-child { width: 37px; }
.sheet tbody th:first-child { border-right-color: #b8b8b8; }
.sheet th.on { background: #e7e7e7; }
.corner svg { margin: auto; }
.map { position: absolute; left: 36px; top: 19px; overflow: hidden; padding: 0 0 4px; }
.grab { position: absolute; width: 7px; height: 7px; background: #cc7a00; border: 1px solid #2a7fe0; }
.gray { fill: none; stroke: #9a9cae; stroke-width: 4; stroke-dasharray: 10 3; }
.casing { fill: none; stroke: #fff; stroke-width: 10; }
.yellow { fill: none; stroke: #e9c34a; stroke-width: 5; }
.orange { fill: none; stroke: #f0924e; stroke-width: 6; }
.lbl { font-family: Roboto, "Noto Sans CJK JP", sans-serif; paint-order: stroke; stroke: #f4efe8; stroke-width: 2px; }
.brown { fill: #6e5546; }
.brown, .city, .blue { font-size: 11px; }
.blue { fill: #4a5fae; font-style: italic; }
.city, .town { fill: #222; }
.town { font-size: 14px; }
.country { font-size: 23px; font-weight: bold; fill: #111; }
.bay { font-size: 12px; fill: #2456a8; stroke: none; }
.scale { font: 15px "DejaVu Sans", sans-serif; fill: #666; }
.vscroll { width: 17px; flex: none; display: flex; flex-direction: column; border-left: 1px solid #eee; padding-right: 1px; }
.vscroll button { height: 16px; background: #fff; color: #777; }
.vscroll i { flex: 0 1 597px; min-height: 0; margin-bottom: 20px; background: #e1e1e1; }
.vscroll button:last-child { margin-top: auto; }
.up { transform: rotate(180deg); }
.hscroll { height: 17px; flex: none; display: flex; padding: 1px 1px 1px 0; }
.hscroll button { width: 16px; background: #fff; }
.hscroll i { width: 468px; background: #e1e1e1; margin-right: auto; }
.sheetbar { height: 20px; flex: none; display: flex; align-items: center; padding-right: 4px; }
.sheet-tab { width: 75px; height: 18px; background: #fff; color: #555; gap: 5px; padding-right: 4px; align-self: flex-start; }
.sheet-new { display: flex; gap: 8px; margin-left: 56px; }
.sheet-nav { display: flex; gap: 20px; margin: 0 18px 0 20px; }
.zoom { appearance: none; flex: 1; min-width: 0; height: 12px; background: linear-gradient(#d5d5d8, #d5d5d8) center / 100% 1px no-repeat; margin: 0 14px 0 7px; }
.zoom::-webkit-slider-thumb { appearance: none; width: 4px; height: 12px; border-radius: 1px; background: #333; }
.pct { width: 34px; height: 20px; margin: 0 5px 0 7px; border: 1px solid #d5d5d8; background: #fff; padding: 0 4px; }

.rail { width: 40px; flex: none; background: #e7e7e7; position: relative; display: flex; flex-direction: column; align-items: center; gap: 4px; }
.rail button { width: 32px; height: 28px; }
.rail .fold { height: 24px; margin-bottom: 1px; }
.rail .on { background: #f5f5f7; }
.badge { position: absolute; width: 40px; height: 40px; border-radius: 50%; background: #fe4445; color: #fff; font: 28px/40px "Noto Sans", sans-serif; text-align: center; box-shadow: 1px 3px 4px rgba(0, 0, 0, .5); z-index: 2; }
.b1 { left: -9px; top: 60px; }
.b2 { left: -9px; top: 281px; }
.b3 { left: 35px; top: 31px; }
.b4 { left: 232px; top: 31px; }

.right { width: 460px; flex: none; background: #f5f5f7; }
.panel-title { height: 27px; display: flex; align-items: center; justify-content: space-between; padding: 1px 6px 0 10px; border-bottom: 1px solid #dadadc; }
.add-row { display: flex; align-items: center; justify-content: space-between; padding: 12px 15px 10px 10px; }
.add-row button { width: 358px; height: 20px; background: #fff; border: 1px solid #dadadc; gap: 2px; color: #222; }
.tabs { display: flex; position: relative; height: 25px; background: #d9dade; }
.tabs button { flex: 1; padding-right: 2px; }
.tabs .on { background: #f0f0f2; }
.mark { position: absolute; border: 3px solid #fe4445; z-index: 1; pointer-events: none; }
.m1 { left: 2px; top: -8px; width: 116px; height: 36px; }
.m2 { left: -5px; right: -3px; top: -11px; height: 30px; }
.preset { display: flex; gap: 5px; padding: 15px 5px 5px; }
.preset button { height: 20px; border: 1px solid #d5d5d8; }
.preset .default { width: 52px; background: #3f9bf9; margin-right: auto; }
.sq { width: 20px; background: #fff; }
.cog { color: #999; }
.kind { margin-right: 12px; }
.thumbs { display: flex; padding: 6px 1px 0; }
.thumbs button { width: 58px; height: 50px; padding-right: 1px; }
.thumbs svg { width: 100%; height: 100%; }
.thumbs .on { border: 2px solid #3f9bf9; padding: 0; }
.group { width: 230px; margin-left: 5px; }
.thumbs + .group { margin-top: 22px; }
.group h3 { height: 24px; background: #ececec; padding: 0 6px 0 4px; display: flex; align-items: center; justify-content: space-between; }
.row { display: flex; align-items: center; padding-left: 4px; }
.row label, .row .lab { width: 73px; flex: none; }
.row .select, .seg { flex: 1; }
.r1 { margin-top: 10px; }
.r2 { margin-top: 10px; height: 19px; }
.url-row { position: relative; display: flex; align-items: center; padding-left: 17px; margin-top: 9px; }
.url-row label { width: 70px; }
.framed { border: 3px solid #fe4445; border-radius: 0; background: #fff; height: 329px; }
textarea.framed { width: 86px; padding: 3px 0 0 4px; resize: none; overflow: hidden; line-height: 16px; outline: 0; }
.connect { width: 42px; margin-left: 12px; }
.group + .group { margin-top: 11px; }
.seg { display: flex; height: 22px; border: 1px solid #d9dade; border-right: 0; background: #fff; }
.seg button { flex: 1; }
.seg .on { background: #3f9bf9; }
```
